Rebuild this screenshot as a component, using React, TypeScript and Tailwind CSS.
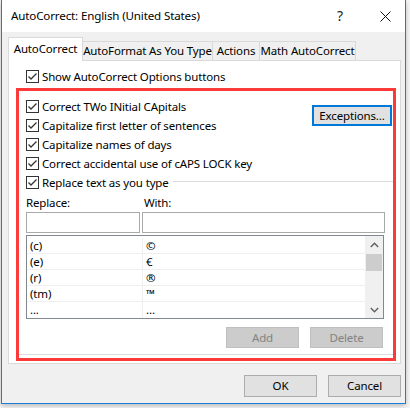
import React from "react";

const font = { fontFamily: '"Noto Sans", "Open Sans", Arial, sans-serif' };

function Check({ label }: { label: string }) {
  return (
    <div className="flex items-center h-[13px]">
      <div className="w-[13px] h-[13px] border border-[#333333] bg-white flex items-center justify-center shrink-0">
        <svg width="11" height="11" viewBox="0 0 11 11">
          <polyline points="1.5,5.5 4,8 9.5,2.5" fill="none" stroke="#333333" strokeWidth="1.3" />
        </svg>
      </div>
      <span className="ml-[3px] text-[11.5px] tracking-[-0.15px] leading-[16px] text-black whitespace-nowrap">{label}</span>
    </div>
  );
}

const rows: [string, string][] = [
  ["(c)", "©"],
  ["(e)", "€"],
  ["(r)", "®"],
  ["(tm)", "™"],
  ["...", "…"],
];

export default function App() {
  return (
    <div className="w-[410px] h-[408px] bg-[#f7f7f7] overflow-hidden text-[11.5px] tracking-[-0.15px]" style={font}>
      <div className="ml-[1px] w-[405px] h-[404px] border-x border-b border-[#1a7fd4] bg-[#f0f0f0] flex flex-col shadow-[0_2px_5px_rgba(0,0,0,0.25)]">
        {/* Title bar */}
        <div className="h-[32px] bg-white flex items-center pl-[9px] shrink-0">
          <span className="leading-[16px] text-black whitespace-nowrap text-[11.6px]">AutoCorrect: English (United States)</span>
          <div className="flex-1" />
          <span className="text-[14px] leading-[16px] text-[#222] mr-[37px]">?</span>
          <svg width="11" height="11" viewBox="0 0 11 11" className="mr-[14px]">
            <path d="M0.5 0.5 L10.5 10.5 M10.5 0.5 L0.5 10.5" stroke="#111" strokeWidth="1" />
          </svg>
        </div>

        <div className="pl-[6px] pr-[4px] flex flex-col">
          {/* Tabs */}
          <div className="mt-[5px] flex items-start h-[24px] leading-[16px] text-black">
            <div className="relative z-10 w-[75px] h-[24px] bg-white border-t border-x border-[#d9d9d9] flex items-center justify-center pb-[2px]">
              AutoCorrect
            </div>
            <div className="mt-[4px] w-[130px] h-[19px] bg-[#f0f0f0] border-t border-r border-[#d9d9d9] flex items-center justify-center whitespace-nowrap">
              AutoFormat As You Type
            </div>
            <div className="mt-[4px] w-[47px] h-[19px] bg-[#f0f0f0] border-t border-r border-[#d9d9d9] flex items-center justify-center">
              Actions
            </div>
            <div className="mt-[4px] w-[96px] h-[19px] bg-[#f0f0f0] border-t border-r border-[#d9d9d9] flex items-center justify-center whitespace-nowrap">
              Math AutoCorrect
            </div>
          </div>

          {/* Panel */}
          <div className="-mt-[1px] w-[393px] h-[304px] bg-white border border-[#d9d9d9] flex flex-col">
            <div className="mt-[9px] ml-[17px]">
              <Check label="Show AutoCorrect Options buttons" />
            </div>

            {/* Red highlight box */}
            <div className="mt-[5px] ml-[7px] w-[380px] h-[273px] border-[3px] border-[#fd3a3a] flex flex-col">
              <div className="pt-[9px] pl-[7px] flex">
                <div className="flex flex-col gap-[6px]">
                  <Check label="Correct TWo INitial CApitals" />
                  <Check label="Capitalize first letter of sentences" />
                  <Check label="Capitalize names of days" />
                  <Check label="Correct accidental use of cAPS LOCK key" />
                </div>
                <div className="flex-1" />
                <div className="mt-[5px] mr-[1px] w-[80px] h-[21px] bg-[#e1e1e1] border-2 border-[#0078d7] flex items-center justify-center leading-[16px] text-black">
                  Exceptions...
                </div>
              </div>
              <div className="mt-[6px] pl-[7px] flex items-start h-[13px]">
                <Check label="Replace text as you type" />
                <div className="flex-1 h-px bg-[#dcdcdc] mt-[5px] ml-[4px]" />
              </div>

              <div className="mt-[6px] pl-[7px] flex h-[16px] leading-[16px] text-black">
                <span className="w-[118px]">Replace:</span>
                <span>With:</span>
              </div>
              <div className="mt-[1px] pl-[7px] flex gap-[2px]">
                <div className="w-[114px] h-[21px] bg-white border border-[#a9a9a9]" />
                <div className="w-[243px] h-[21px] bg-white border border-[#a9a9a9]" />
              </div>

              {/* List */}
              <div className="mt-[2px] ml-[7px] w-[358px] h-[84px] border border-[#828790] bg-white flex">
                <div className="w-[338px] pt-[2px] flex flex-col leading-[16px] text-black">
                  {rows.map(([a, b], i) => (
                    <div
                      key={i}
                      className={`flex h-[16px] ${i < rows.length - 1 ? "border-b border-[#efefef]" : ""}`}
                    >
                      <div className="w-[115px] pl-[3px] whitespace-nowrap">{a}</div>
                      <div className="flex-1 border-l border-[#efefef] pl-[3px] whitespace-nowrap">{b}</div>
                    </div>
                  ))}
                </div>
                <div className="w-[18px] bg-[#f0f0f0] flex flex-col items-center">
                  <div className="h-[17px] w-full flex items-center justify-center">
                    <svg width="9" height="6" viewBox="0 0 9 6">
                      <polyline points="0.8,5 4.5,1.2 8.2,5" fill="none" stroke="#606060" strokeWidth="1.4" />
                    </svg>
                  </div>
                  <div className="mt-[1px] w-[16px] h-[17px] bg-[#cdcdcd]" />
                  <div className="flex-1" />
                  <div className="h-[17px] w-full flex items-center justify-center">
                    <svg width="9" height="6" viewBox="0 0 9 6">
                      <polyline points="0.8,1 4.5,4.8 8.2,1" fill="none" stroke="#606060" strokeWidth="1.4" />
                    </svg>
                  </div>
                </div>
              </div>

              {/* Add / Delete */}
              <div className="mt-[8px] flex justify-end gap-[11px] pr-[10px]">
                <div className="w-[73px] h-[21px] bg-[#cccccc] border border-[#bfbfbf] flex items-center justify-center leading-[16px] text-[#838383]">
                  Add
                </div>
                <div className="w-[73px] h-[21px] bg-[#cccccc] border border-[#bfbfbf] flex items-center justify-center leading-[16px] text-[#838383]">
                  Delete
                </div>
              </div>
              <div className="mt-[6px] h-px bg-[#dcdcdc]" />
            </div>
          </div>

          {/* OK / Cancel */}
          <div className="mt-[11px] flex justify-end gap-[11px]">
            <div className="w-[73px] h-[22px] bg-[#e1e1e1] border border-[#adadad] flex items-center justify-center leading-[16px] text-black">
              OK
            </div>
            <div className="w-[73px] h-[22px] bg-[#e1e1e1] border border-[#adadad] flex items-center justify-center leading-[16px] text-black">
              Cancel
            </div>
          </div>
        </div>
      </div>
    </div>
  );
}
